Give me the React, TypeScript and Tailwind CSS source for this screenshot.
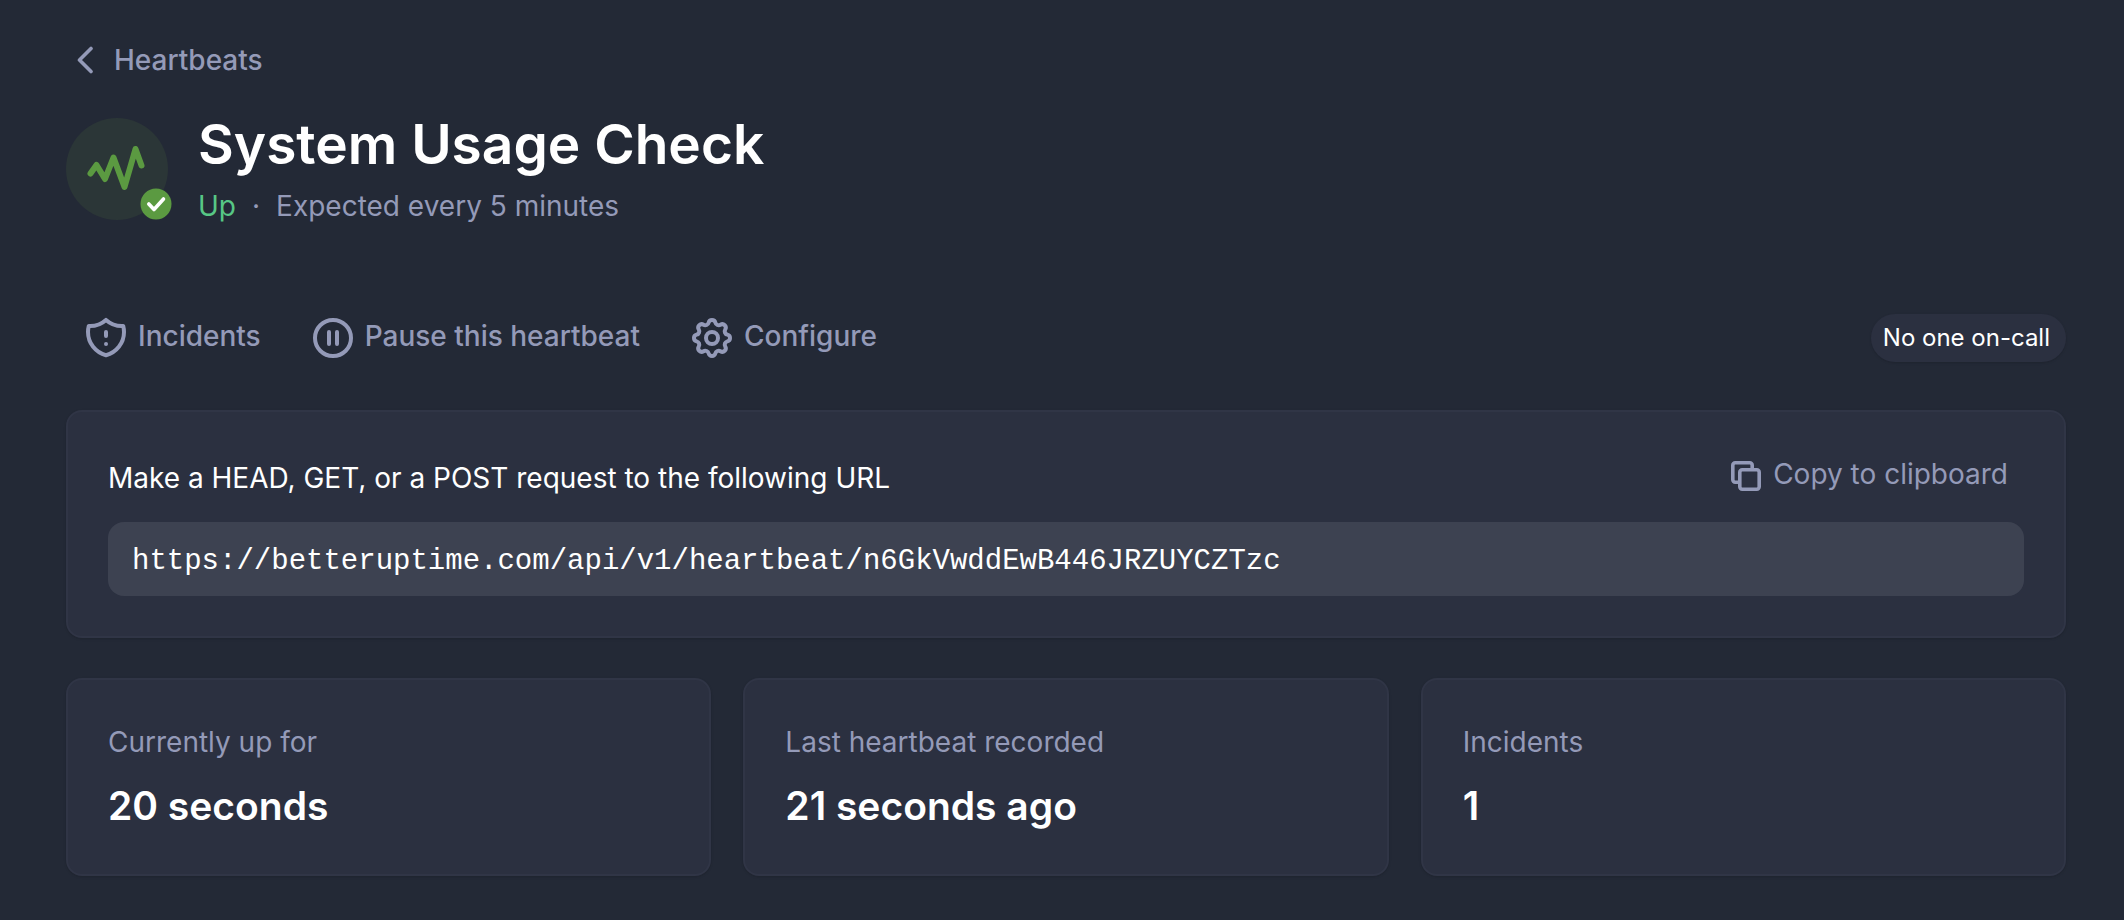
import type { ReactNode } from "react";

function Icon({ children }: { children: ReactNode }) {
  return (
    <svg
      aria-hidden="true"
      viewBox="0 0 24 24"
      fill="none"
      stroke="currentColor"
      strokeWidth={2}
      strokeLinecap="round"
      strokeLinejoin="round"
      className="size-12 shrink-0"
    >
      {children}
    </svg>
  );
}

function ShieldIcon() {
  return (
    <Icon>
      <path d="M20.618 5.984A11.955 11.955 0 0112 2.944a11.955 11.955 0 01-8.618 3.04A12.02 12.02 0 003 9c0 5.591 3.824 10.29 9 11.622 5.176-1.332 9-6.03 9-11.622 0-1.042-.133-2.052-.382-3.016zM12 9v2m0 4h.01" />
    </Icon>
  );
}

function PauseIcon() {
  return (
    <Icon>
      <path d="M10 9v6m4-6v6m7-3a9 9 0 11-18 0 9 9 0 0118 0z" />
    </Icon>
  );
}

function CogIcon() {
  return (
    <Icon>
      <path d="M10.325 4.317c.426-1.756 2.924-1.756 3.35 0a1.724 1.724 0 002.573 1.066c1.543-.94 3.31.826 2.37 2.37a1.724 1.724 0 001.065 2.572c1.756.426 1.756 2.924 0 3.35a1.724 1.724 0 00-1.066 2.573c.94 1.543-.826 3.31-2.37 2.37a1.724 1.724 0 00-2.572 1.065c-.426 1.756-2.924 1.756-3.35 0a1.724 1.724 0 00-2.573-1.066c-1.543.94-3.31-.826-2.37-2.37a1.724 1.724 0 00-1.065-2.572c-1.756-.426-1.756-2.924 0-3.35a1.724 1.724 0 001.066-2.573c-.94-1.543.826-3.31 2.37-2.37.996.608 2.296.07 2.572-1.065z" />
      <path d="M15 12a3 3 0 11-6 0 3 3 0 016 0z" />
    </Icon>
  );
}

function CopyIcon() {
  return (
    <svg
      aria-hidden="true"
      viewBox="0 0 30 30"
      fill="none"
      stroke="currentColor"
      strokeWidth={3.6}
      strokeLinejoin="round"
      className="size-[30px] shrink-0"
    >
      <rect x="8.8" y="8.8" width="19.4" height="19.4" rx="2.4" />
      <path d="M21.2 8V4.2A2.4 2.4 0 0018.8 1.8H4.2A2.4 2.4 0 001.8 4.2v14.6A2.4 2.4 0 004.2 21.2h4" />
    </svg>
  );
}

function StatusBadge() {
  return (
    <div className="relative size-[102px] shrink-0 rounded-full bg-[#2b3637]">
      <svg
        aria-hidden="true"
        viewBox="0 0 102 102"
        fill="none"
        stroke="#5b9a41"
        strokeWidth={6}
        strokeLinecap="round"
        strokeLinejoin="round"
        className="size-full"
      >
        <path d="M24.5 55.5L30.5 47L39 61L47.5 39.5L58.5 69L69.5 31L75.5 47.5" />
      </svg>
      <svg aria-hidden="true" viewBox="0 0 32 32" className="absolute -right-1 bottom-0 size-8">
        <circle cx="16" cy="16" r="15.5" fill="#5b9a41" />
        <path
          d="M8.8 16L14 21.5L23.5 11"
          fill="none"
          stroke="#fff"
          strokeWidth={3.6}
          strokeLinecap="round"
          strokeLinejoin="round"
        />
      </svg>
    </div>
  );
}

const actions = [
  { label: "Incidents", icon: <ShieldIcon /> },
  { label: "Pause this heartbeat", icon: <PauseIcon /> },
  { label: "Configure", icon: <CogIcon /> },
];

const stats = [
  { label: "Currently up for", value: "20 seconds" },
  { label: "Last heartbeat recorded", value: "21 seconds ago" },
  { label: "Incidents", value: "1" },
];

const card = "rounded-2xl border-2 border-[#303546] bg-[#2b3040] p-10 shadow-sm";

export default function App() {
  return (
    <div className="min-h-screen bg-[#232936] pt-10 pr-[58px] pb-11 pl-[66px] font-['Inter',sans-serif] text-[28px] leading-10 text-[#949ab8]">
      <header>
        <a href="#heartbeats" className="flex w-fit items-center gap-5 pl-2.5 font-medium">
          <svg
            aria-hidden="true"
            viewBox="0 0 18 28"
            fill="none"
            stroke="currentColor"
            strokeWidth={3.6}
            strokeLinecap="round"
            strokeLinejoin="round"
            className="h-7 w-[18px]"
          >
            <path d="M15 2.5L3.5 14L15 25.5" />
          </svg>
          Heartbeats
        </a>
        <div className="mt-7 flex gap-[30px]">
          <div className="pt-2.5">
            <StatusBadge />
          </div>
          <div>
            <h1 className="text-[55px] leading-[72px] font-semibold text-white">
              System Usage Check
            </h1>
            <p className="mt-1.5 flex gap-4">
              <span className="text-[#57c785]">Up</span>
              <span>·</span>
              <span>Expected every 5 minutes</span>
            </p>
          </div>
        </div>
      </header>

      <div className="mt-22 flex items-center justify-between">
        <nav className="flex gap-12 pl-4 font-medium">
          {actions.map((a) => (
            <button key={a.label} type="button" className="flex items-center gap-2">
              {a.icon}
              <span className="pb-1">{a.label}</span>
            </button>
          ))}
        </nav>
        <span className="rounded-full bg-[#2b3040] py-1 pr-4 pl-3 text-2xl leading-10 text-white shadow-sm">
          No one on-call
        </span>
      </div>

      <section className={`mt-12 ${card}`}>
        <div className="flex h-12 items-center justify-between pr-4">
          <label htmlFor="heartbeat-url" className="pt-1 text-white">
            Make a HEAD, GET, or a POST request to the following URL
          </label>
          <button type="button" className="flex items-center gap-3">
            <CopyIcon />
            <span className="pb-1">Copy to clipboard</span>
          </button>
        </div>
        <input
          id="heartbeat-url"
          readOnly
          value="https://betteruptime.com/api/v1/heartbeat/n6GkVwddEwB446JRZUYCZTzc"
          className="mt-[22px] block h-[74px] w-full rounded-2xl bg-[#3d4251] px-6 pt-1 font-['Liberation_Mono',monospace] text-[29px] text-white outline-none"
        />
      </section>

      <dl className="mt-10 grid grid-cols-3 gap-8">
        {stats.map((s) => (
          <div key={s.label} className={card}>
            <dt className="leading-11">{s.label}</dt>
            <dd className="mt-3.5 text-[39px] leading-14 font-semibold text-white">{s.value}</dd>
          </div>
        ))}
      </dl>
    </div>
  );
}
